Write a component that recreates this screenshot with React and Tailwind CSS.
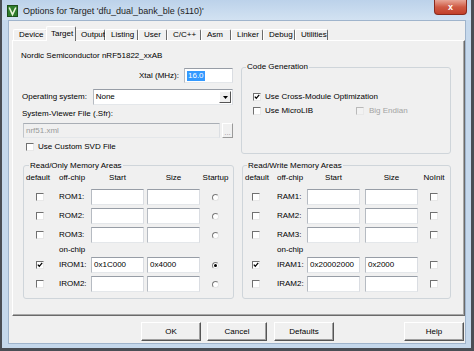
import React from 'react';

function Check({ checked, disabled }) {
  return (
    <span
      className={`inline-flex w-[8px] h-[8px] shrink-0 border border-r-[#e8e8e8] border-b-[#e8e8e8] ${
        disabled ? 'bg-[#f2f2f2] border-t-[#b9b9b9] border-l-[#b9b9b9]' : 'bg-white border-t-[#707070] border-l-[#707070]'
      }`}
    >
      {checked && (
        <svg viewBox="0 0 6 6" className="w-full h-full block">
          <path d="M0.8 2.6 L2.3 4.3 L5.2 0.9" fill="none" stroke="#000" strokeWidth="1.3" />
        </svg>
      )}
    </span>
  );
}

function Radio({ checked }) {
  return (
    <span className="inline-flex items-center justify-center w-[7px] h-[7px] rounded-full bg-white border border-t-[#7a7a7a] border-l-[#7a7a7a] border-r-[#e4e4e4] border-b-[#e4e4e4]">
      {checked && <span className="w-[3px] h-[3px] rounded-full bg-black" />}
    </span>
  );
}

function Field({ className = '', children }) {
  return (
    <div
      className={`h-full bg-white border border-t-[#979da6] border-l-[#b6bbc2] border-r-[#dadde2] border-b-[#e4e7ea] pl-[2px] flex items-center leading-none ${className}`}
    >
      {children}
    </div>
  );
}

function Button({ className = '', children }) {
  return (
    <div
      className={`h-[19px] flex items-center justify-center bg-[#f0f0f0] border border-t-white border-l-white border-r-[#555] border-b-[#555] shadow-[inset_-1px_-1px_0_#a0a0a0] ${className}`}
    >
      {children}
    </div>
  );
}

const tabs = [
  ['Device', 'w-[34px]'],
  ['Target', 'w-[30px]'],
  ['Output', 'w-[30px]'],
  ['Listing', 'w-[33px]'],
  ['User', 'w-[29px]'],
  ['C/C++', 'w-[34px]'],
  ['Asm', 'w-[30px]'],
  ['Linker', 'w-[32px]'],
  ['Debug', 'w-[32px]'],
  ['Utilities', 'w-[33px]'],
];

function RomRow({ label, checked, start, size, startup, className = '' }) {
  return (
    <div className={`flex items-center h-[16px] ${className}`}>
      <div className="w-[34px] pl-[11px] flex">
        <Check checked={checked} />
      </div>
      <div className="w-[32px]">{label}</div>
      <Field className="w-[53px]">{start}</Field>
      <Field className="w-[53px] ml-[3px]">{size}</Field>
      <div className="w-[31px] flex justify-center">
        <Radio checked={startup} />
      </div>
    </div>
  );
}

function RamRow({ label, checked, start, size, className = '' }) {
  return (
    <div className={`flex items-center h-[16px] ${className}`}>
      <div className="w-[33px] pl-[8px] flex">
        <Check checked={checked} />
      </div>
      <div className="w-[30px]">{label}</div>
      <Field className="w-[53px]">{start}</Field>
      <Field className="w-[53px] ml-[5px]">{size}</Field>
      <div className="w-[32px] flex justify-center">
        <Check />
      </div>
    </div>
  );
}

export default function App() {
  return (
    <div className="w-[474px] h-[351px] bg-[#4a4e55] overflow-hidden font-['Liberation_Sans',Arial,sans-serif] text-[8px] text-black">
      <div className="ml-[2px] w-[469px] h-[348px] bg-[#c5d8ec] flex flex-col">
        {/* title bar */}
        <div className="h-[20px] flex items-start bg-linear-to-b from-[#bcd2ea] to-[#d2e2f2]">
          <svg viewBox="0 0 11 12" className="w-[11px] h-[12px] ml-[5px] mt-[5px]">
            <rect x="0.5" y="0.5" width="10" height="11" fill="#2f7d2c" stroke="#1d4f1b" />
            <path d="M2.2 2.5 L5.5 9.5 L8.8 2.5" fill="none" stroke="#e8f3d8" strokeWidth="1.6" />
          </svg>
          <span className="ml-[5px] mt-[5px] text-[9px] leading-[12px] text-[#1e1e1e]">
            Options for Target 'dfu_dual_bank_ble (s110)'
          </span>
          <div className="ml-auto mr-[4px] w-[33px] h-[15px] rounded-b-[4px] border border-t-0 border-[#8a2a1c] bg-linear-to-b from-[#e7a597] via-[#cf5a44] to-[#c2402a] flex items-center justify-center">
            <span className="text-white font-bold text-[9px] leading-none">x</span>
          </div>
        </div>

        {/* client area */}
        <div className="ml-[6px] w-[458px] h-[324px] bg-[#f0f0f0] border border-[#9fb4cc] flex flex-col">
          {/* tabs */}
          <div className="ml-[4px] mt-[5px] h-[14px] flex items-end">
            {tabs.map(([name, w]) =>
              name === 'Target' ? (
                <div
                  key={name}
                  className={`${w} relative z-10 h-[15px] -mb-[1px] -mx-[1px] pl-[4px] pt-[2px] bg-[#f0f0f0] border-t border-l border-white border-r border-r-[#6a6a6a] rounded-t-[2px] leading-[10px]`}
                >
                  {name}
                </div>
              ) : (
                <div
                  key={name}
                  className={`${w} h-[11px] pl-[5px] bg-[#f0f0f0] border-t border-l border-white border-r border-r-[#6a6a6a] rounded-t-[2px] leading-[10px]`}
                >
                  {name}
                </div>
              )
            )}
          </div>

          {/* tab panel */}
          <div className="ml-[3px] w-[453px] h-[276px] border border-t-white border-l-white border-r-[#6a6a6a] border-b-[#6a6a6a] shadow-[inset_-1px_-1px_0_#a8a8a8] pl-[8px] pt-[9px] flex flex-col">
            <div className="flex items-start h-[104px]">
              {/* left column */}
              <div className="w-[212px] flex flex-col">
                <div className="h-[12px] leading-[12px]">Nordic Semiconductor nRF51822_xxAB</div>
                <div className="mt-[6px] h-[15px] flex items-center justify-end">
                  <span>Xtal (MHz):</span>
                  <Field className="w-[49px] ml-[5px]">
                    <span className="bg-[#3399ff] text-white px-[1px] py-[1px]">16.0</span>
                  </Field>
                </div>
                <div className="mt-[6px] h-[16px] flex items-center">
                  <span className="ml-[1px] w-[71px]">Operating system:</span>
                  <div className="w-[141px] h-full bg-white border border-t-[#979da6] border-l-[#b6bbc2] border-r-[#dadde2] border-b-[#e4e7ea] flex items-center">
                    <span className="pl-[2px] flex-1">None</span>
                    <div className="w-[12px] h-[12px] mr-[1px] bg-[#f0f0f0] border border-t-white border-l-white border-r-[#555] border-b-[#555] flex items-center justify-center">
                      <svg viewBox="0 0 5 3" className="w-[5px] h-[3px]">
                        <path d="M0 0 H5 L2.5 3 Z" fill="#000" />
                      </svg>
                    </div>
                  </div>
                </div>
                <div className="mt-[3px] h-[12px] leading-[12px] ml-[1px]">System-Viewer File (.Sfr):</div>
                <div className="mt-[3px] h-[15px] flex ml-[2px]">
                  <div className="w-[197px] h-full bg-[#f0f0f0] border border-t-[#a9aeb5] border-l-[#c2c6cb] border-r-[#dcdfe3] border-b-[#e4e7ea] pl-[2px] flex items-center text-[#9a9a9a]">
                    nrf51.xml
                  </div>
                  <div className="w-[11px] h-full ml-[2px] bg-[#f0f0f0] border border-t-white border-l-white border-r-[#9a9a9a] border-b-[#9a9a9a] flex items-end justify-center text-[#9a9a9a] leading-[9px]">
                    ...
                  </div>
                </div>
                <div className="mt-[4px] h-[10px] ml-[5px] flex items-center gap-[4px]">
                  <Check />
                  <span>Use Custom SVD File</span>
                </div>
              </div>

              {/* code generation */}
              <fieldset className="ml-[8px] mt-[11px] w-[210px] h-[93px] border border-[#cfd5da] rounded-[3px]">
                <legend className="ml-[4px] px-[1px] leading-[12px]">Code Generation</legend>
                <div className="pl-[11px] pt-[19px] flex flex-col gap-[4px]">
                  <div className="h-[10px] flex items-center gap-[4px]">
                    <Check checked />
                    <span>Use Cross-Module Optimization</span>
                  </div>
                  <div className="h-[10px] flex items-center">
                    <div className="w-[103px] flex items-center gap-[4px]">
                      <Check />
                      <span>Use MicroLIB</span>
                    </div>
                    <div className="flex items-center gap-[5px] text-[#a3a3a3]">
                      <Check disabled />
                      <span>Big Endian</span>
                    </div>
                  </div>
                </div>
              </fieldset>
            </div>

            <div className="mt-[6px] flex items-start">
              {/* read only */}
              <fieldset className="ml-[2px] w-[211px] h-[139px] border border-[#cfd5da] rounded-[3px]">
                <legend className="ml-[5px] px-[1px] leading-[11px]">Read/Only Memory Areas</legend>
                <div className="pl-[1px] flex flex-col">
                  <div className="mt-[1px] h-[12px] flex items-center">
                    <span className="w-[34px] pl-[1px]">default</span>
                    <span className="w-[32px]">off-chip</span>
                    <span className="w-[53px] text-center">Start</span>
                    <span className="w-[53px] ml-[3px] text-center">Size</span>
                    <span className="w-[31px] text-center">Startup</span>
                  </div>
                  <RomRow label="ROM1:" className="mt-[5px]" />
                  <RomRow label="ROM2:" className="mt-[3px]" />
                  <RomRow label="ROM3:" className="mt-[3px]" />
                  <div className="mt-[1px] h-[12px] flex items-center pl-[34px]">on-chip</div>
                  <RomRow label="IROM1:" checked start="0x1C000" size="0x4000" startup className="mt-[1px]" />
                  <RomRow label="IROM2:" className="mt-[3px]" />
                </div>
              </fieldset>

              {/* read write */}
              <fieldset className="ml-[8px] w-[209px] h-[139px] border border-[#cfd5da] rounded-[3px]">
                <legend className="ml-[4px] px-[1px] leading-[11px]">Read/Write Memory Areas</legend>
                <div className="pl-[1px] flex flex-col">
                  <div className="mt-[1px] h-[12px] flex items-center">
                    <span className="w-[33px] pl-[1px]">default</span>
                    <span className="w-[30px]">off-chip</span>
                    <span className="w-[53px] text-center">Start</span>
                    <span className="w-[53px] ml-[5px] text-center">Size</span>
                    <span className="w-[32px] text-center">NoInit</span>
                  </div>
                  <RamRow label="RAM1:" className="mt-[5px]" />
                  <RamRow label="RAM2:" className="mt-[3px]" />
                  <RamRow label="RAM3:" className="mt-[3px]" />
                  <div className="mt-[1px] h-[12px] flex items-center pl-[33px]">on-chip</div>
                  <RamRow label="IRAM1:" checked start="0x20002000" size="0x2000" className="mt-[1px]" />
                  <RamRow label="IRAM2:" className="mt-[3px]" />
                </div>
              </fieldset>
            </div>
          </div>

          {/* buttons */}
          <div className="mt-[6px] flex">
            <Button className="ml-[132px] w-[60px]">OK</Button>
            <Button className="ml-[6px] w-[60px]">Cancel</Button>
            <Button className="ml-[7px] w-[60px]">Defaults</Button>
            <Button className="ml-[70px] w-[60px]">Help</Button>
          </div>
        </div>
      </div>
    </div>
  );
}
